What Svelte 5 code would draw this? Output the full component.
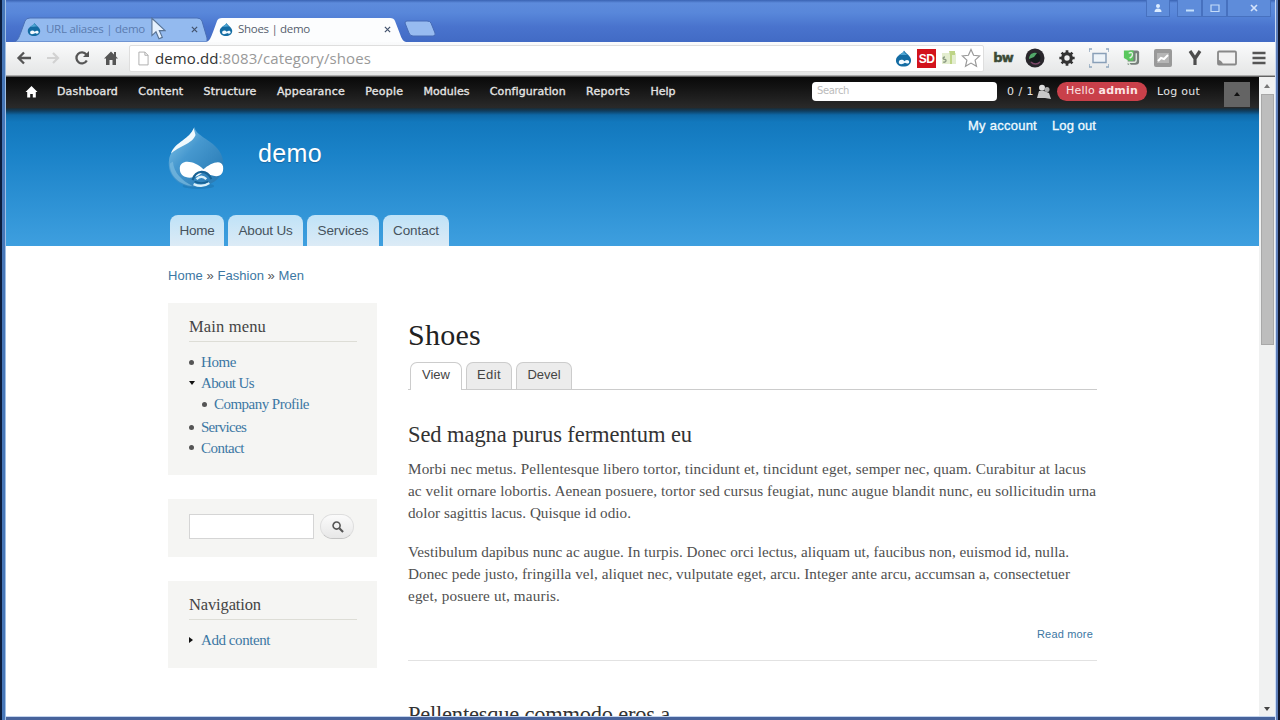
<script>
  const menu = [
    ['Dashboard', 61], ['Content', 45], ['Structure', 53], ['Appearance', 68], ['People', 38],
    ['Modules', 46], ['Configuration', 76], ['Reports', 44], ['Help', 25],
  ];
  const siteTabs = [['Home', 35, 54], ['About Us', 54, 75], ['Services', 51, 72], ['Contact', 46, 66]];
  const paragraphs = [
    [
      ['Morbi nec metus. Pellentesque libero tortor, tincidunt et, tincidunt eget, semper nec, quam. Curabitur at lacus', 678],
      ['ac velit ornare lobortis. Aenean posuere, tortor sed cursus feugiat, nunc augue blandit nunc, eu sollicitudin urna', 688],
      ['dolor sagittis lacus. Quisque id odio.', 223],
    ],
    [
      ['Vestibulum dapibus nunc ac augue. In turpis. Donec orci lectus, aliquam ut, faucibus non, euismod id, nulla.', 661],
      ['Donec pede justo, fringilla vel, aliquet nec, vulputate eget, arcu. Integer ante arcu, accumsan a, consectetuer', 662],
      ['eget, posuere ut, mauris.', 152],
    ],
  ];
  const localTabs = [['View', 28, 52], ['Edit', 24, 46], ['Devel', 33, 56]];

  // Tracks a label out (or in) so that it fills the given width.
  function fit(node, width) {
    node.style.letterSpacing = '0px';
    const natural = node.getBoundingClientRect().width;
    node.style.letterSpacing = `${(width - natural) / node.textContent.length}px`;
  }
</script>

{#snippet drop()}
  <svg class="drop" viewBox="0 0 18 18">
    <path d="M9.5 0.5C9 4 1 5 1 11c0 4 3.500 6.500 8 6.500s8-2.500 8-6.500C17 6 12 4.500 9.500 .5z" fill="#146ca3" />
    <path d="M4 5.500C6 4.500 8.500 3 9.300 1c.5 2 2 3 3.700 4.200-3 .3-6 0-9 .3z" fill="#4fa5d3" />
    <path d="M4 13c0-3 4-3.400 6-1.200 2-2 5-1.600 5 .8 0 2-2.500 2.300-4.500 1C8.500 15.400 4 16 4 13z" fill="#f3faff" />
  </svg>
{/snippet}

<div class="window">
  <header class="titlebar">
    <div class="tabs">
      <div class="tab back">
        <svg class="shape" viewBox="0 0 194 25" preserveAspectRatio="none"><path d="M0 25C4 24 5 20 7 15L11 4Q12 1 16 1H183Q187 1 188 4L193 21V25Z" fill="#93baef" stroke="#4a6fb5" stroke-width="1" /></svg>
        {@render drop()}
        <span class="label"><span use:fit={99}>URL aliases | demo</span></span>
        <svg class="close" viewBox="0 0 8 8"><path d="M1 1l6 6M7 1L1 7" /></svg>
      </div>
      <div class="tab front">
        <svg class="shape" viewBox="0 0 200 25" preserveAspectRatio="none"><path d="M0 25C4 24 5 20 7 15L11 4Q12 1 16 1H184Q188 1 189 4L194 17Q196 24 200 25Z" fill="#fcfdfe" /></svg>
        {@render drop()}
        <span class="label"><span use:fit={72}>Shoes | demo</span></span>
        <svg class="close" viewBox="0 0 8 8"><path d="M1 1l6 6M7 1L1 7" /></svg>
      </div>
      <svg class="newtab" viewBox="0 0 32 17"><path d="M1 3Q1 1 3 1H23Q26 1 27 3L31 13Q32 16 29 16H9Q6 16 5 13Z" fill="#97bbf0" stroke="#466bb5" /></svg>
    </div>
    <div class="controls">
      <span class="ctl user"><svg viewBox="0 0 10 10"><circle cx="5" cy="3" r="2" fill="#dcecff" /><path d="M1.500 9q0-3.500 3.500-3.500T8.500 9z" fill="#dcecff" /></svg></span>
      <span class="ctl"><svg viewBox="0 0 10 10"><path d="M1 6.500h8v2H1z" fill="#c4e0fb" /></svg></span>
      <span class="ctl"><svg viewBox="0 0 10 10"><path d="M1 2h8v6.500H1z" fill="none" stroke="#c4dcf9" stroke-width="1.200" /></svg></span>
      <span class="ctl x"><svg viewBox="0 0 10 10"><path d="M2 2l6 6M8 2L2 8" stroke="#d3e2fa" stroke-width="1.700" /></svg></span>
    </div>
    <svg class="cursor" viewBox="0 0 16 25"><path d="M1 1v18.500l4.300-4 3.200 7.500 3.600-1.600-3.200-7.200H15z" fill="#e6f1fd" stroke="#587394" stroke-width="1.200" /></svg>
  </header>

  <div class="toolbar">
    <div class="nav">
      <span><svg viewBox="0 0 16 16"><path d="M8 2.500L2.500 8 8 13.500M3 8h12" fill="none" stroke="#555" stroke-width="2.300" /></svg></span>
      <span><svg viewBox="0 0 16 16"><path d="M8 3l5 5-5 5M12.500 8H2" fill="none" stroke="#d2d2d2" stroke-width="2.200" /></svg></span>
      <span><svg viewBox="0 0 16 16"><path d="M12.800 10.500a5.500 5.500 0 1 1-.5-6" fill="none" stroke="#555" stroke-width="2.300" /><path d="M9 7h6V1z" fill="#555" /></svg></span>
      <span><svg viewBox="0 0 16 16"><path d="M8 1.500L1 8.500h2V15h3.500v-5h3v5H13V8.500h2L13 6.500V2h-2v2.500z" fill="#555" /></svg></span>
    </div>
    <div class="omnibox">
      <svg class="page" viewBox="0 0 12 16"><path d="M1 1h6.500L11 4.500V15H1zM7.500 1v3.500H11" fill="#fff" stroke="#aaa" /></svg>
      <span class="url"><span use:fit={216}><b>demo.dd</b>:8083/category/shoes</span></span>
      <div class="actions">
        {@render drop()}
        <span class="sd">SD</span>
        <svg class="leaf" viewBox="0 0 16 16"><path d="M1 3h14v11H1z" fill="#e3edcf" /><path d="M4 7c-3 0-2 2.500 0 2.500S5 13 2 12" fill="none" stroke="#8b9a83" stroke-width="1.300" /><path d="M8 1h6v4h-3v9H9V5z" fill="#bed486" /></svg>
        <svg class="star" viewBox="0 0 20 20"><path d="M10 1.500l2.600 5.800 6.100.6-4.600 4.200 1.400 6.200L10 15.100l-5.500 3.200 1.400-6.200L1.300 7.900l6.100-.6z" fill="#fff" stroke="#9a9a9a" stroke-width="1.200" /></svg>
      </div>
    </div>
    <div class="extensions">
      <span class="bw">bw</span>
      <span><svg viewBox="0 0 20 20"><circle cx="10" cy="10" r="9.500" fill="#29262b" /><circle cx="10" cy="10" r="5.500" fill="#141b1c" /><path d="M4 11a6 6 0 0 1 8-6l-3 4z" fill="#52a869" /><path d="M6 14a6 6 0 0 0 9 0" fill="none" stroke="#7a4667" stroke-width="1.400" /></svg></span>
      <span><svg class="gear" viewBox="0 0 20 20"><circle cx="10" cy="10" r="4.800" fill="none" stroke="#333" stroke-width="3.600" /><path d="M10 1.500v3M10 15.500v3M1.500 10h3M15.500 10h3M4 4l2 2M14 14l2 2M4 16l2-2M14 6l2-2" stroke="#333" stroke-width="3" /></svg></span>
      <span><svg viewBox="0 0 20 20"><path d="M4 5.500h13v9H4z" fill="#edf3f8" stroke="#8aa0b8" stroke-width="1.500" /><path d="M0 4V1h3M17 1h3v3M0 16v3h3M17 19h3v-3" fill="none" stroke="#91a8be" stroke-width="1.500" /></svg></span>
      <span><svg class="note" viewBox="0 0 20 20"><path d="M8 2h8q2 0 2 2v10q0 3-4 3H6v-6z" fill="#777f7b" /><path d="M2 2h10v11H7l-5-3z" fill="#58c75c" /><path d="M7 5q4-2 4 1t-3 4M5 14.500h8q2 0 2-3V5M7 15l2 3" fill="none" stroke="#e2efe2" stroke-width="1.400" /></svg></span>
      <span><svg viewBox="0 0 20 20"><rect x="1" y="1" width="18" height="18" rx="2" fill="#999" /><path d="M4 5h12v10H4z" fill="#b5b5b5" /><path d="M5 13l3-3 3 1 4-4" fill="none" stroke="#fff" stroke-width="2" /></svg></span>
      <span><svg viewBox="0 0 20 20"><path d="M5 3l5 7.500L15 3M10 10v7" fill="none" stroke="#4d4d4d" stroke-width="3.200" /></svg></span>
      <span><svg viewBox="0 0 20 20"><rect x="1" y="3.500" width="18" height="13" rx="1" fill="#f2f2f2" stroke="#888" stroke-width="1.800" /><path d="M1 12q4 0 5 4.500H1z" fill="#888" /></svg></span>
      <span><svg viewBox="0 0 20 20"><path d="M3.500 5h13M3.500 10h13M3.500 15h13" stroke="#555" stroke-width="2.600" /></svg></span>
    </div>
  </div>

  <div class="viewport">
    <div class="site">
      <nav class="admin">
        <svg class="house" viewBox="0 0 12 12"><path d="M6 0l6 6h-1.700v5.500H7.300V8H4.700v3.500H1.700V6H0z" fill="#fff" /></svg>
        {#each menu as [name, w]}
          <span class="item" style:width="{w}px"><span use:fit={w}>{name}</span></span>
        {/each}
        <span class="search"><span use:fit={32}>Search</span></span>
        <span class="count"><span use:fit={27}>0 / 1</span></span>
        <svg class="people" viewBox="0 0 14 16"><circle cx="5" cy="3.800" r="3" fill="#ddd" /><circle cx="10" cy="5.500" r="2.500" fill="#aaa" /><path d="M0 14l2-7h5l5 2 2 6-6-1z" fill="#c8c8c8" /></svg>
        <span class="hello"><span use:fit={72}>Hello <b>admin</b></span></span>
        <span class="logout"><span use:fit={43}>Log out</span></span>
        <span class="shortcut"><svg viewBox="0 0 8 8"><path d="M4 2l3 4H1z" fill="#111" /></svg></span>
      </nav>

      <header class="banner">
        <div class="inner">
          <svg class="logo" viewBox="0 0 58 64">
            <defs>
              <linearGradient id="g" x1="0" y1="0" x2="1" y2="1"><stop offset="0" stop-color="#8ccbea" /><stop offset=".4" stop-color="#4698cf" /><stop offset="1" stop-color="#2375af" /></linearGradient>
            </defs>
            <ellipse cx="31" cy="60" rx="16" ry="3" fill="#1c71ac" opacity=".5" />
            <path d="M27 0C28 11 53 14 56 34 59 51 44 61 28 61S-1 50 1 34C3 18 21 14 27 0z" fill="url(#g)" />
            <path d="M26 1C23 12 7 15 3 27 10 20 25 17 28 8z" fill="#f0f9fd" />
            <path d="M2 37C1 50 13 59 25 60 14 54 6 47 5 35z" fill="#7abbe0" opacity=".7" />
            <path d="M12 42.500C12 32 27 34 36 43c7-6 18-11 20-3 1.500 11-7 13-20 5.500C28 54 12 54 12 42.500z" fill="#fff" />
            <path d="M25 54c3-11 15-11 19-1" fill="none" stroke="#176294" stroke-width="2.200" />
            <path d="M29 53q5-5 10 0M26 58q9 4 16-1" fill="none" stroke="#d9f0fa" stroke-width="2.400" />
            <path d="M27 55.500q7 3 14 0" fill="none" stroke="#176294" stroke-width="1.600" />
          </svg>
          <h1><span use:fit={64}>demo</span></h1>
          <div class="account"><span use:fit={69}>My account</span><span use:fit={44}>Log out</span></div>
        </div>
        <div class="sitetabs">
          {#each siteTabs as [name, w, box]}
            <span class="sitetab" style:width="{box}px"><span use:fit={w}>{name}</span></span>
          {/each}
        </div>
      </header>

      <div class="crumbs"><span use:fit={136}><a>Home</a> » <a>Fashion</a> » <a>Men</a></span></div>

      <div class="columns">
        <aside>
          <section class="block main">
            <h2><span use:fit={77}>Main menu</span></h2>
            <ul>
              <li><i class="dot"></i><a use:fit={35}>Home</a></li>
              <li><i class="down"></i><a use:fit={53}>About Us</a></li>
              <li class="sub"><i class="dot"></i><a use:fit={95}>Company Profile</a></li>
              <li><i class="dot"></i><a use:fit={45}>Services</a></li>
              <li><i class="dot"></i><a use:fit={43}>Contact</a></li>
            </ul>
          </section>
          <section class="block find">
            <span class="field"></span>
            <span class="go"><svg viewBox="0 0 14 14"><circle cx="6" cy="6" r="3.800" fill="none" stroke="#555" stroke-width="1.700" /><path d="M9 9l4 4" stroke="#555" stroke-width="2.300" /></svg></span>
          </section>
          <section class="block">
            <h2><span use:fit={72}>Navigation</span></h2>
            <ul><li><i class="right"></i><a use:fit={69}>Add content</a></li></ul>
          </section>
        </aside>
        <main>
          <h1><span use:fit={73}>Shoes</span></h1>
          <div class="local">
            {#each localTabs as [name, w, box], i}
              <span class="ltab" class:active={i === 0} style:width="{box}px"><span use:fit={w}>{name}</span></span>
            {/each}
          </div>
          <article>
            <h2><span use:fit={284}>Sed magna purus fermentum eu</span></h2>
            {#each paragraphs as lines}
              <p>{#each lines as [line, w]}<span class="line"><span use:fit={w}>{line}</span></span>{/each}</p>
            {/each}
            <div class="more"><a use:fit={56}>Read more</a></div>
          </article>
          <article>
            <h2><span use:fit={262}>Pellentesque commodo eros a</span></h2>
          </article>
        </main>
      </div>
    </div>
    <div class="scrollbar">
      <i class="up"></i>
      <span class="thumb"></span>
      <i class="dn"></i>
    </div>
  </div>
</div>

<style>
  :global(body) { overflow: hidden; background: #fff; }
  .window {
    box-sizing: border-box; width: 1280px; height: 720px; display: flex; flex-direction: column;
    padding: 0 5px 4px 6px; position: relative;
    background: linear-gradient(#c3d4ee 0 1px, #47639b 1px) 0 100% / 100% 4px no-repeat, #fff;
    font-family: "Open Sans", sans-serif;
  }
  .window::before { content: ""; position: absolute; z-index: 5; left: 0; top: 0; bottom: 0; width: 6px; background: linear-gradient(90deg, #0b1d3d 0 2px, #4777b8 2px 5px, #9fbfe6 5px); }
  .window::after { content: ""; position: absolute; z-index: 5; right: 0; top: 0; bottom: 0; width: 5px; background: linear-gradient(90deg, #c9daf5 0 1px, #5d7eb9 1px 3px, #10162c 3px); }
  .window *, .window *::before { box-sizing: border-box; }
  span { white-space: nowrap; }
  svg { display: block; }

  .titlebar { position: relative; flex: none; height: 42px; display: flex; justify-content: space-between; background: linear-gradient(#3a63b3 0, #5d8bdc 3px, #5887da 13px, #4973cd 27px, #426bc5 42px); }
  .tabs { display: flex; align-items: flex-end; padding-left: 8px; }
  .tab { position: relative; display: flex; align-items: center; width: 194px; height: 25px; padding-left: 13px; }
  .tab.front { width: 200px; margin-left: -2px; }
  .shape { position: absolute; inset: 0; width: 100%; height: 100%; }
  .drop { position: relative; width: 14px; height: 15px; flex: none; }
  .tab .label { position: relative; top: -1px; margin-left: 5px; width: 100px; font-size: 11.500px; color: #5b7cb0; }
  .tab.front .label { color: #555e6d; }
  .close { position: relative; width: 7px; height: 7px; margin-left: 45px; stroke: #43536d; stroke-width: 1.400; }
  .tab.front .close { margin-left: 46px; }
  .newtab { width: 32px; height: 17px; margin-bottom: 5px; margin-left: -2px; }
  .controls { display: flex; height: 17px; margin-right: 4px; }
  .ctl { width: 25px; display: grid; place-items: center; border: 1px solid #4771bf; border-top: 0; background: #5e8cda; }
  .ctl svg { width: 10px; height: 10px; }
  .ctl.user { width: 24px; margin-right: 7px; }
  .ctl.x { width: 44px; padding-left: 10px; }
  .cursor { position: absolute; left: 145px; top: 17px; width: 15px; height: 24px; }

  .toolbar { flex: none; height: 35px; display: flex; align-items: center; padding: 0 0 3px 3px; background: linear-gradient(#fafbfc, #e5e6e6 33px, #707070 34px, #555); }
  .nav { display: flex; width: 120px; }
  .nav span { width: 29px; display: grid; place-items: center; }
  .nav svg { width: 16px; height: 16px; }
  .omnibox { display: flex; align-items: center; width: 855px; height: 27px; padding: 0 2px 0 8px; background: #fff; border: 1px solid #dedede; border-radius: 2px; }
  .page { width: 11px; height: 15px; }
  .url { margin-left: 6px; flex: 1; color: #999; font-size: 15px; }
  .url b { font-weight: 400; color: #333; }
  .actions { display: flex; align-items: center; }
  .actions .drop { width: 17px; height: 19px; margin-right: 5px; }
  .sd { width: 19px; height: 19px; font: 700 12px/20px "Liberation Sans", sans-serif; letter-spacing: -.5px; text-align: center; color: #fff; background: #d2131c; }
  .leaf { width: 16px; height: 18px; margin: 0 4px 0 5px; }
  .star { width: 20px; height: 20px; }
  .extensions { display: flex; margin-left: 3px; }
  .extensions span { width: 32px; display: grid; place-items: center; }
  .extensions svg { width: 20px; height: 20px; }
  .extensions .gear { width: 18px; height: 18px; }
  .extensions .note { width: 19px; height: 20px; }
  .extensions .bw { font: 900 13px/20px "DejaVu Sans", sans-serif; letter-spacing: -1px; color: #3c4b37; -webkit-text-stroke: .5px; }

  .viewport { flex: 1; min-height: 0; display: flex; }
  .site { width: 1253px; overflow: hidden; display: flex; flex-direction: column; background: #fff; }
  .admin { flex: none; height: 31px; display: flex; align-items: center; padding: 0 9px 2px 19px; color: #e4e4e4; font: 400 11px/15px "DejaVu Sans", sans-serif; background: linear-gradient(#090909, #131313 10px, #292929 30px); }
  .house { width: 13px; height: 12px; margin-right: 19px; flex: none; }
  .item { margin-right: 20.300px; flex: none; -webkit-text-stroke: .35px; }
  .search { width: 185px; height: 19px; margin-left: auto; padding-left: 5px; border-radius: 4px; background: #fff; color: #bbb; font-size: 10px; line-height: 18px; }
  .count { width: 27px; margin-left: 10px; }
  .people { width: 14px; height: 16px; margin-left: 3px; }
  .hello { width: 90px; height: 19px; margin-left: 6px; padding-left: 9px; line-height: 18px; border-radius: 10px; background: #c9404a; color: #fce4e4; }
  .logout { width: 43px; margin-left: 10px; }
  .shortcut { width: 26px; height: 25px; margin: 5px 0 0 24px; display: grid; place-items: center; background: #646464; }
  .shortcut svg { width: 8px; height: 8px; }

  .banner { flex: none; height: 138px; display: flex; flex-direction: column; justify-content: space-between; padding: 0 162px; background: linear-gradient(#1d2b33 0, #0f3e60 3px, #0e68a7 7px, #1278bd 14px, #1a82c8 45px, #3e9fdf); }
  .inner { display: flex; align-items: flex-start; }
  .logo { width: 57px; height: 63px; margin-top: 19px; }
  .banner h1 { flex: 1; margin: 28px 0 0 33px; font: 400 25px/34px "Liberation Sans", sans-serif; color: #fff; text-shadow: 0 1px 1px #1767a2; }
  .account { display: flex; gap: 15px; margin: 9px 1px 0 0; font: 400 13px/17px "Liberation Sans", sans-serif; color: #f0faff; -webkit-text-stroke: .3px; }
  .sitetabs { display: flex; gap: 4px; padding-left: 2px; }
  .sitetab { height: 31px; border-radius: 8px 8px 0 0; text-align: center; background: linear-gradient(#bfe2f7, #dcebf6); font: 400 13.500px/31px "Liberation Sans", sans-serif; color: #46535d; }

  .crumbs { flex: none; padding: 20px 162px 0; font: 400 13px/20px "Liberation Sans", sans-serif; color: #555; }
  a { color: #3c77a3; }
  .columns { display: flex; gap: 31px; padding: 17px 162px 0; }
  aside { width: 209px; flex: none; display: flex; flex-direction: column; gap: 24px; }
  .block { padding: 14px 20px 0 21px; background: #f5f5f3; height: 87px; }
  .block.main { height: 172px; }
  .block.find { height: 58px; display: flex; align-items: flex-start; gap: 6px; padding-top: 15px; }
  h2, p, ul, main h1 { margin: 0; padding: 0; font-family: "Liberation Serif", serif; font-weight: 400; }
  .block h2 { height: 25px; font-size: 16.500px; line-height: 19px; color: #444; border-bottom: 1px solid #ddddd6; }
  ul { list-style: none; padding-top: 10px; }
  li { display: flex; align-items: center; height: 20.500px; font-size: 15px; line-height: 20px; }
  li.sub { padding-left: 13px; height: 24px; padding-bottom: 2px; }
  li i { width: 5px; height: 5px; margin-right: 7px; }
  .dot { border-radius: 50%; background: #555; }
  .down { border: 3px solid transparent; border-top: 4px solid #111; border-bottom: 0; height: 4px; width: 6px; margin-right: 6px; }
  .right { border: 3px solid transparent; border-left: 4px solid #111; border-right: 0; height: 6px; width: 4px; margin-right: 8px; }
  .field { width: 125px; height: 25px; border: 1px solid #d5d5d5; background: #fff; }
  .go { width: 34px; height: 25px; border: 1px solid #dedede; border-bottom-color: #c4c4c4; border-radius: 13px; background: linear-gradient(#fbfbfb, #e7e7e7); display: grid; place-items: center; }
  .go svg { width: 13px; height: 13px; }

  main { width: 689px; padding-top: 15px; }
  main h1 { font-size: 30px; line-height: 34px; color: #222; }
  .local { display: flex; gap: 4px; height: 38px; align-items: flex-end; padding-left: 2px; border-bottom: 1px solid #ccc; }
  .ltab { height: 27px; border: 1px solid #ccc; border-bottom: 0; border-radius: 7px 7px 0 0; background: #ececec; text-align: center; font: 400 13px/24px "Liberation Sans", sans-serif; color: #444; }
  .ltab.active { height: 28px; margin-bottom: -1px; background: #fff; }
  article { padding-top: 31px; height: 271px; border-bottom: 1px solid #e2e2e2; }
  article h2 { height: 37px; font-size: 22.500px; line-height: 27px; color: #333; }
  article p { margin-bottom: 17px; font-size: 15.200px; color: #505050; }
  .line { display: block; height: 22px; line-height: 22px; }
  .more { display: flex; justify-content: flex-end; padding-right: 4px; font: 400 11px/20px "Liberation Sans", sans-serif; margin-top: 17px; }
  article + article { padding-top: 40px; }

  .scrollbar { width: 16px; display: flex; flex-direction: column; align-items: center; padding: 7px 1px 5px; background: #f0f1f1; }
  .thumb { width: 13px; height: 251px; margin-top: 6px; background: #bdbdbd; border: 1px solid #a8a8a8; }
  .up { border: 3px solid transparent; border-bottom: 4px solid #777; border-top: 0; }
  .dn { border: 3px solid transparent; border-top: 4px solid #444; border-bottom: 0; margin-top: auto; }
</style>
